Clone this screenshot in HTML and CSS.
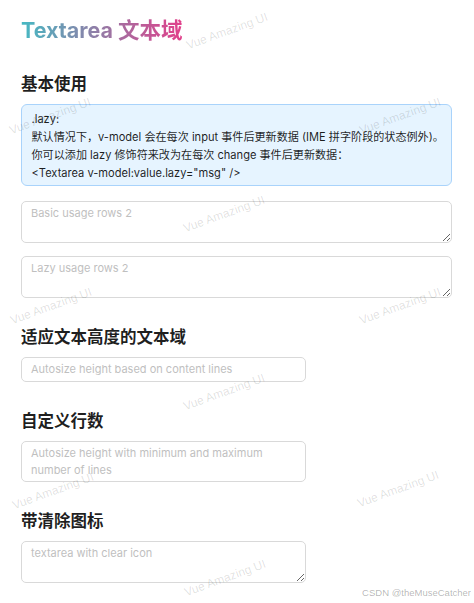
FILE: index.html
```html
<!DOCTYPE html>
<html lang="zh-CN">
<head>
<meta charset="utf-8">
<title>Textarea 文本域</title>
<link rel="stylesheet" href="styles.css">
</head>
<body>
<div class="page">
  <h1 class="title">Textarea 文本域</h1>

  <h2 class="section-title">基本使用</h2>
  <div class="alert">
    <div>.lazy:</div>
    <div>默认情况下，v-model 会在每次 input 事件后更新数据 (IME 拼字阶段的状态例外)。</div>
    <div>你可以添加 lazy 修饰符来改为在每次 change 事件后更新数据：</div>
    <div>&lt;Textarea v-model:value.lazy="msg" /&gt;</div>
  </div>
  <textarea class="ta ta-full ta-rows2 ta-after-alert" placeholder="Basic usage rows 2"></textarea>
  <textarea class="ta ta-full ta-rows2 ta-next" placeholder="Lazy usage rows 2"></textarea>

  <h2 class="section-title">适应文本高度的文本域</h2>
  <textarea class="ta ta-half ta-auto1" placeholder="Autosize height based on content lines"></textarea>

  <h2 class="section-title">自定义行数</h2>
  <textarea class="ta ta-half ta-auto2" placeholder="Autosize height with minimum and maximum number of lines"></textarea>

  <h2 class="section-title">带清除图标</h2>
  <textarea class="ta ta-half ta-rows2" placeholder="textarea with clear icon"></textarea>
</div>

<div class="watermarks">
  <span class="wm wm-1">Vue Amazing UI</span>
  <span class="wm wm-2">Vue Amazing UI</span>
  <span class="wm wm-3">Vue Amazing UI</span>
  <span class="wm wm-4">Vue Amazing UI</span>
  <span class="wm wm-5">Vue Amazing UI</span>
  <span class="wm wm-6">Vue Amazing UI</span>
  <span class="wm wm-7">Vue Amazing UI</span>
  <span class="wm wm-8">Vue Amazing UI</span>
  <span class="wm wm-9">Vue Amazing UI</span>
  <span class="wm wm-10">Vue Amazing UI</span>
</div>
<div class="csdn">CSDN @theMuseCatcher</div>
</body>
</html>
```

FILE: styles.css
```css
html, body {
  margin: 0;
  padding: 0;
  background: #ffffff;
}
body {
  position: relative;
  width: 474px;
  height: 603px;
  overflow: hidden;
  font-family: Inter, "Noto Sans CJK SC", sans-serif;
  color: rgba(0, 0, 0, 0.88);
}
.page {
  padding: 15px 22px 0 21px;
}
.title {
  margin: 0;
  font-size: 21.5px;
  line-height: 30px;
  font-weight: 700;
  display: inline-block;
  background-image: linear-gradient(90deg, #45b9c3 0%, #8e7fa8 45%, #e23f8a 100%);
  -webkit-background-clip: text;
  background-clip: text;
  color: transparent;
}
.section-title {
  margin: 25px 0 8px;
  font-family: "Noto Sans CJK SC", sans-serif;
  font-size: 16.5px;
  line-height: 26px;
  font-weight: 700;
  color: rgba(0, 0, 0, 0.88);
}
.alert {
  box-sizing: border-box;
  height: 82px;
  padding: 5px 4px 3px 9.5px;
  border: 1px solid #a9d3fb;
  border-radius: 6px;
  background: #e6f4ff;
  font-size: 11.1px;
  line-height: 18px;
  white-space: nowrap;
  overflow: hidden;
  color: rgba(0, 0, 0, 0.88);
}
.ta {
  display: block;
  box-sizing: border-box;
  margin: 0;
  padding: 3px 9px;
  border: 1px solid #d9d9d9;
  border-radius: 5px;
  background: #fff;
  font-family: Inter, "Noto Sans CJK SC", sans-serif;
  font-size: 11px;
  line-height: 17px;
  color: rgba(0, 0, 0, 0.88);
  outline: none;
  resize: vertical;
}
.ta::placeholder {
  color: #bfbfbf;
}
.ta-full {
  width: 431px;
}
.ta-half {
  width: 285px;
}
.ta-rows2 {
  height: 42px;
}
.ta-after-alert {
  margin-top: 15px;
}
.ta-next {
  margin-top: 13px;
}
.ta-auto1 {
  height: 25px;
  resize: none;
  overflow: hidden;
}
.ta-auto2 {
  height: 41px;
  resize: none;
  overflow: hidden;
}

.watermarks {
  position: absolute;
  inset: 0;
  pointer-events: none;
  z-index: 10;
}
.wm {
  position: absolute;
  white-space: nowrap;
  font-family: "Liberation Sans", Arial, sans-serif;
  font-size: 12px;
  color: rgba(0, 0, 0, 0.13);
  transform: translate(-50%, -50%) rotate(-20deg);
}
.wm-1 { left: 227px; top: 31px; }
.wm-2 { left: 50px; top: 116px; }
.wm-3 { left: 400px; top: 116px; }
.wm-4 { left: 224px; top: 214px; }
.wm-5 { left: 51px; top: 306px; }
.wm-6 { left: 400px; top: 306px; }
.wm-7 { left: 224px; top: 392px; }
.wm-8 { left: 53px; top: 491px; }
.wm-9 { left: 398px; top: 489px; }
.wm-10 { left: 225px; top: 578px; }

.csdn {
  position: absolute;
  right: 3px;
  bottom: 5px;
  font-family: "Liberation Sans", Arial, sans-serif;
  font-size: 9.5px;
  color: rgba(0, 0, 0, 0.3);
  pointer-events: none;
}
```
